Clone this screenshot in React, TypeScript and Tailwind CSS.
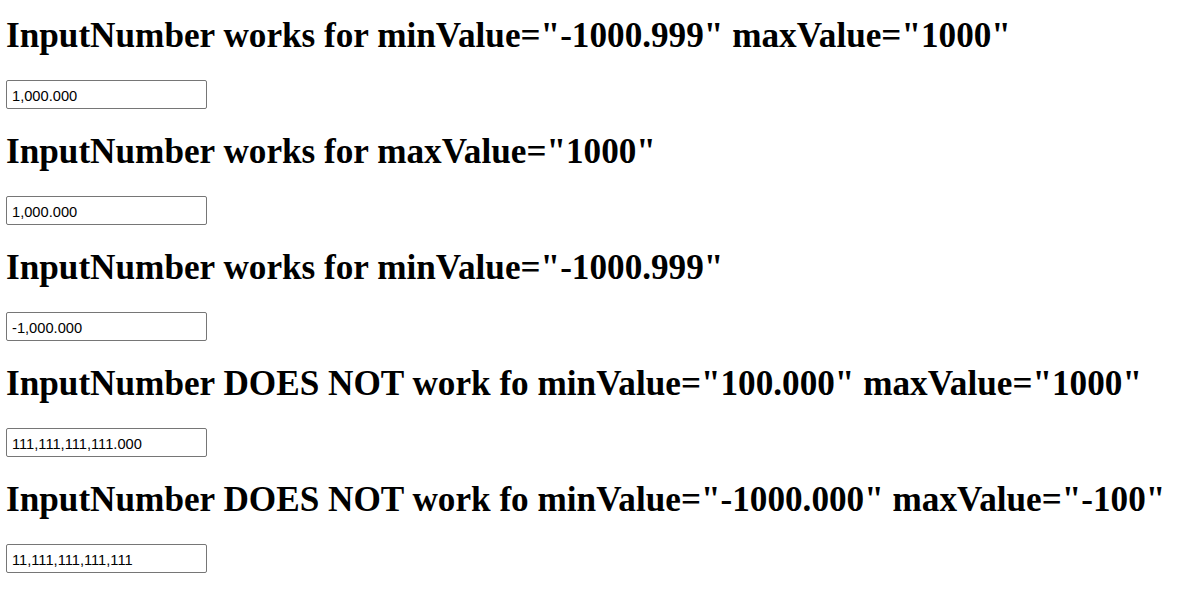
import { useState } from "react"

const cases = [
    { title: 'InputNumber works for minValue="-1000.999" maxValue="1000"', value: "1,000.000" },
    { title: 'InputNumber works for maxValue="1000"', value: "1,000.000" },
    { title: 'InputNumber works for minValue="-1000.999"', value: "-1,000.000" },
    { title: 'InputNumber DOES NOT work fo minValue="100.000" maxValue="1000"', value: "111,111,111,111.000" },
    { title: 'InputNumber DOES NOT work fo minValue="-1000.000" maxValue="-100"', value: "11,111,111,111,111" },
]

function NumberCase({ title, initial }: { title: string; initial: string }) {
    const [value, setValue] = useState(initial)

    return (
        <div className="flex flex-col items-start">
            <h1 className="text-[35.2px] leading-[37px] font-bold text-black font-['Liberation_Serif',serif] mb-[26px] whitespace-nowrap">
                {title}
            </h1>
            <input
                type="text"
                value={value}
                onChange={(e) => setValue(e.target.value)}
                className="w-[201px] h-[29px] mb-[24px] pl-[5px] pr-[4px] pt-[3px] pb-0 border border-[#767676] rounded-[2px] bg-white text-black text-[14.67px] font-['Liberation_Sans',Arial,sans-serif] outline-none"
            />
        </div>
    )
}

export default function App() {
    return (
        <div className="min-h-[592px] bg-white px-[6px] pt-[17px]">
            {cases.map((c) => (
                <NumberCase key={c.title} title={c.title} initial={c.value} />
            ))}
        </div>
    )
}
